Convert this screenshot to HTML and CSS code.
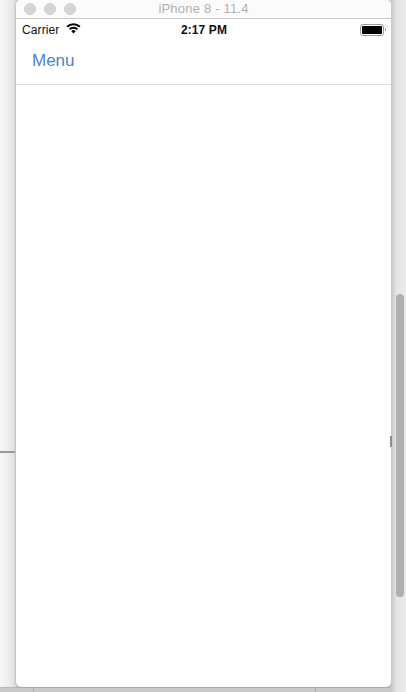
FILE: index.html
```html
<!DOCTYPE html>
<html lang="en">
<head>
<meta charset="utf-8">
<title>iPhone 8 - 11.4</title>
<link rel="stylesheet" href="styles.css">
</head>
<body>
<div class="backdrop">
  <div class="rule"></div>
  <div class="bottom-lines"><span></span><span></span></div>
  <main class="window">
    <header class="titlebar">
      <div class="lights"><span></span><span></span><span></span></div>
      <div class="title">iPhone 8 - 11.4</div>
    </header>
    <div class="statusbar">
      <div class="status-left">
        <span class="carrier">Carrier</span>
        <svg class="wifi" viewBox="0 0 16 12" width="15" height="11"><path d="M8 11.500 5.600 8.900a3.400 3.400 0 0 1 4.800 0zM4.500 7.700 3 6.100a7 7 0 0 1 10 0l-1.500 1.600a5 5 0 0 0-7 0zM1.900 5 .3 3.400a11 11 0 0 1 15.400 0L14.100 5a8.800 8.800 0 0 0-12.200 0z" fill="#000"/></svg>
      </div>
      <div class="clock">2:17 PM</div>
      <div class="battery"><span class="battery-body"><span class="battery-fill"></span></span><span class="battery-cap"></span></div>
    </div>
    <nav class="navbar"><a class="menu">Menu</a></nav>
  </main>
  <div class="track"><div class="thumb"></div></div>
  <div class="notch"></div>
</div>
</body>
</html>
```
FILE: styles.css
```css
* { box-sizing: border-box; }
html, body { margin: 0; height: 100%; }
body { font-family: "Liberation Sans", Arial, sans-serif; overflow: hidden; }
.backdrop {
  position: relative;
  width: 406px;
  height: 692px;
  background: linear-gradient(90deg, #f7f7f7 0, #eeeeee 8px, #e4e4e4 13px, #d4d4d4 16px);
  padding-left: 16px;
  overflow: hidden;
}
.rule { position: absolute; left: 0; top: 451px; width: 16px; height: 1.500px; background: #9a9a9a; }
.bottom-lines { position: absolute; left: 0; right: 0; bottom: 0; height: 5px; background: #c9c9c9; border-top: 1px solid #b9b9b9; }
.bottom-lines span { position: absolute; top: 0; bottom: 0; width: 1px; background: #a8a8a8; }
.bottom-lines span:first-child { left: 33px; }
.bottom-lines span:last-child { left: 315px; }
.window {
  position: relative;
  width: 375px;
  height: 687px;
  background: #fff;
  border-radius: 5px;
  box-shadow: 0 1px 1px #a9a9a9, 1px 0 1px #c4c4c4, -1px 0 1px #c8c8c8;
  overflow: hidden;
}
.titlebar {
  position: relative;
  height: 19px;
  background: #fbfbfb;
  border-bottom: 1px solid #c8c8c8;
}
.lights { position: absolute; left: 8px; top: 3px; display: flex; gap: 8px; }
.lights span { width: 12px; height: 12px; border-radius: 50%; background: #d6d6d6; border: 1px solid #cfcfcf; }
.title { text-align: center; font-size: 13px; line-height: 18px; color: #b0b0b0; letter-spacing: .2px; }
.statusbar {
  display: grid;
  grid-template-columns: 1fr auto 1fr;
  align-items: center;
  height: 21px;
  padding: 0 5px 0 6px;
  font-size: 12px;
  color: #111;
}
.status-left { display: flex; align-items: center; gap: 7px; }
.carrier { letter-spacing: .1px; }
.wifi { margin-top: -3px; }
.clock { font-weight: 700; font-size: 12px; letter-spacing: .1px; }
.battery { display: flex; align-items: center; justify-content: flex-end; }
.battery-body { display: block; width: 24px; height: 12px; padding: 1px; border: 1px solid #9a9a9a; border-radius: 3px; }
.battery-fill { display: block; height: 100%; background: #000; border-radius: 1px; }
.battery-cap { width: 1.500px; height: 3px; background: #999; margin-left: 1px; }
.navbar {
  height: 45px;
  display: flex;
  align-items: center;
  padding: 0 0 3px 16px;
  border-bottom: 1px solid #dedede;
}
.menu { font-size: 17px; color: #4a86c8; }
.track {
  position: absolute;
  left: 391px;
  top: 0;
  width: 15px;
  height: 692px;
  background: linear-gradient(90deg, #c9c9c9 0, #d4d4d4 3px, #e4e4e4 5px, #ebebeb 100%);
}
.thumb { position: absolute; left: 5px; top: 294px; width: 8px; height: 303px; border-radius: 4px; background: #b0b0b0; }
.notch { position: absolute; left: 390px; top: 436px; width: 2px; height: 11px; background: #8d8d8d; }
```
